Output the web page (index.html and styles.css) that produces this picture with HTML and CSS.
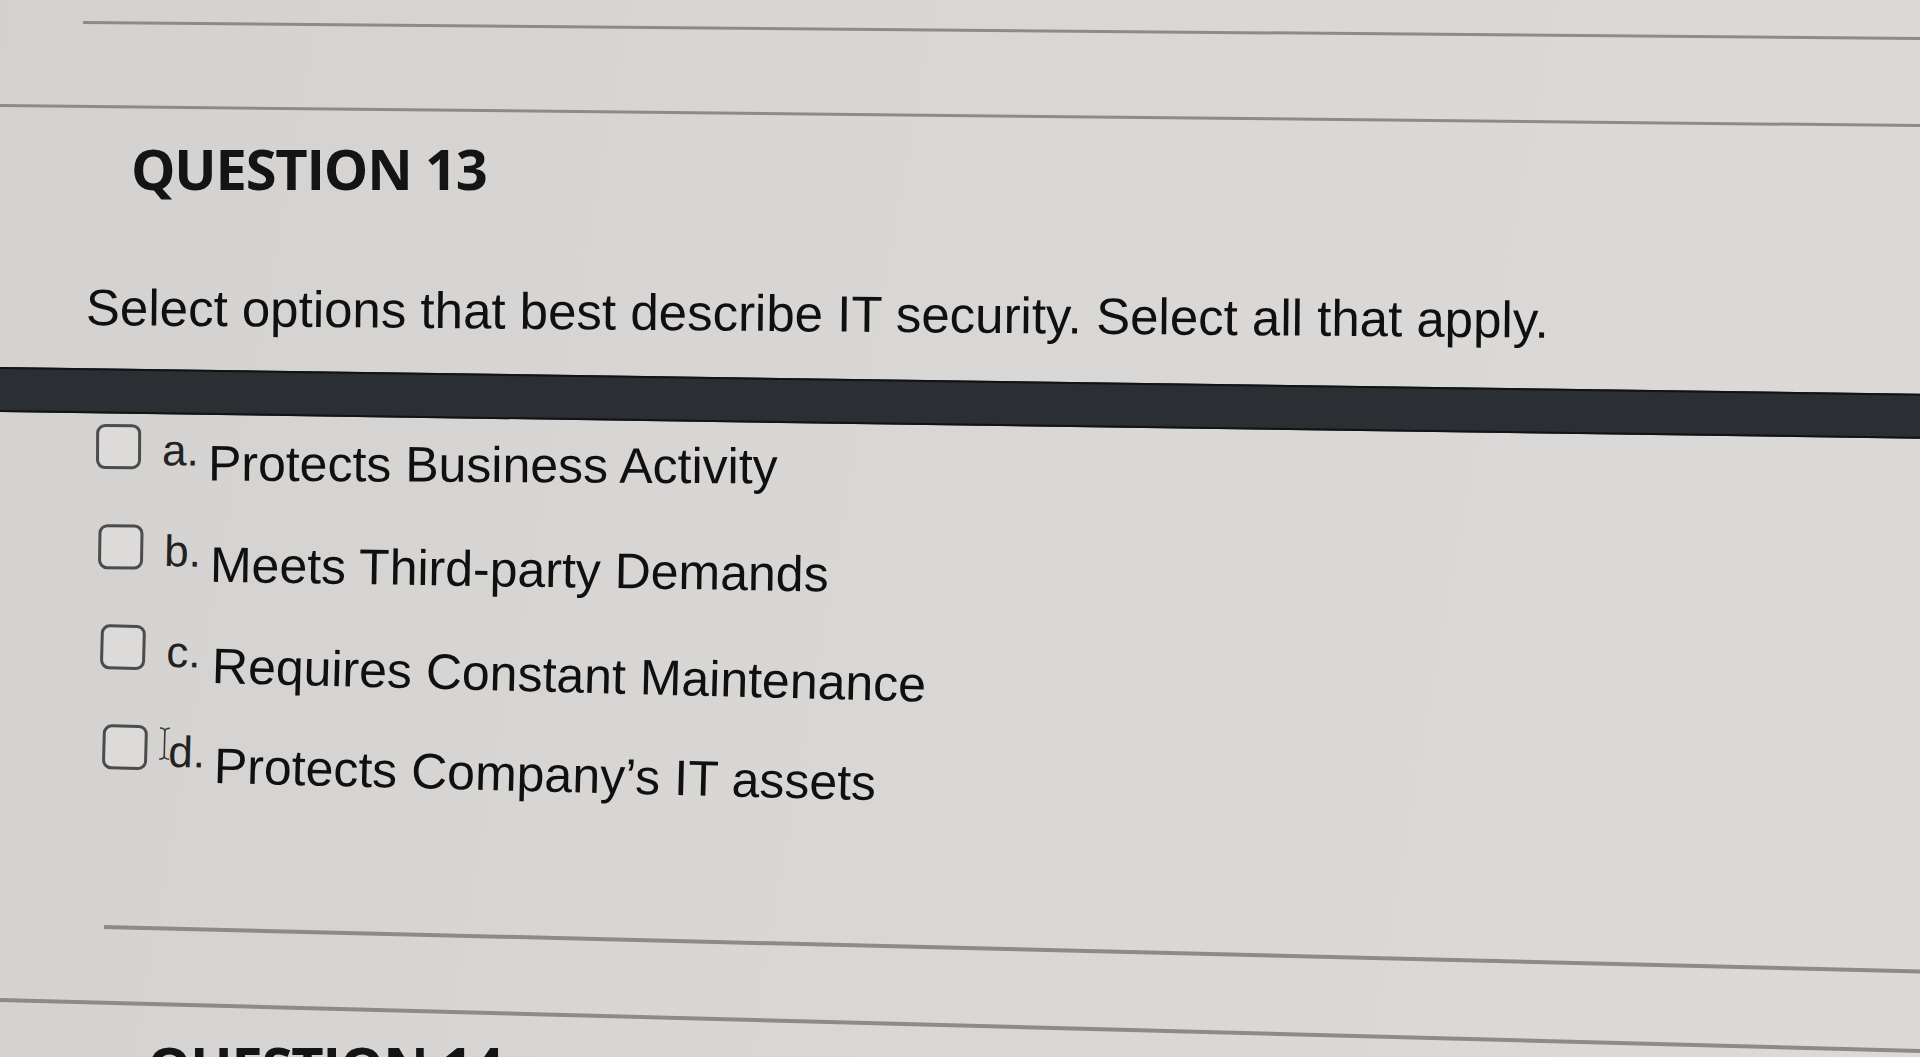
FILE: index.html
```html
<!DOCTYPE html>
<html lang="en">
<head>
<meta charset="utf-8">
<title>Question 13</title>
<link rel="stylesheet" href="styles.css">
</head>
<body>
<div class="page">
  <div class="rule rule-top"></div>
  <div class="rule rule-section"></div>
  <h2 class="q-title">QUESTION 13</h2>
  <p class="q-text">Select options that best describe IT security. Select all that apply.</p>
  <div class="answer-bar"></div>
  <ul class="options">
    <li class="option tilt-a"><span class="checkbox"></span><span class="opt-label">a.</span><span class="opt-text">Protects Business Activity</span></li>
    <li class="option tilt-b"><span class="checkbox"></span><span class="opt-label">b.</span><span class="opt-text">Meets Third-party Demands</span></li>
    <li class="option tilt-c"><span class="checkbox"></span><span class="opt-label">c.</span><span class="opt-text">Requires Constant Maintenance</span></li>
    <li class="option tilt-d"><span class="checkbox"></span><span class="opt-label">d.</span><span class="opt-text">Protects Company’s IT assets</span>
      <svg class="ibeam" width="14" height="34" viewBox="0 0 14 34"><path d="M2 1.5 Q7 1.5 7 5 Q7 1.5 12 1.5 M7 5 V29 M2 32.5 Q7 32.5 7 29 Q7 32.5 12 32.5" fill="none" stroke="#3a3a3a" stroke-width="1.6"/></svg>
    </li>
  </ul>
  <div class="rule rule-3"></div>
  <div class="rule rule-4"></div>
  <h2 class="q-title next">QUESTION 14</h2>
</div>
</body>
</html>
```
FILE: styles.css
```css
html, body {
  margin: 0;
  padding: 0;
  height: 1057px;
  overflow: hidden;
}
body {
  background: #d8d6d4;
  color: #111;
  font-family: "Liberation Sans", Arial, sans-serif;
}
.page {
  display: flex;
  flex-direction: column;
  align-items: flex-start;
  height: 1057px;
  overflow: hidden;
  background: linear-gradient(100deg, #d4d2d0 0%, #d9d7d5 45%, #dcdad8 100%);
}
.rule {
  height: 3px;
  background: #8c8b8a;
  transform-origin: left top;
  flex-shrink: 0;
}
.rule-top {
  margin-top: 21px;
  margin-left: 83px;
  width: 1880px;
  transform: rotate(0.5deg);
}
.rule-section {
  margin-top: 80px;
  width: 1960px;
  transform: rotate(0.6deg);
}
.q-title {
  margin: 33px 0 0 131px;
  font-family: "Open Sans", sans-serif;
  font-weight: 700;
  font-size: 56px;
  line-height: 56px;
  letter-spacing: -1.2px;
  color: #141414;
}
.q-text {
  margin: 86px 0 0 86px;
  font-size: 51px;
  line-height: 51px;
  white-space: nowrap;
  color: #101010;
  transform: rotate(0.5deg);
  transform-origin: left center;
}
.answer-bar {
  margin-top: 34px;
  width: 1980px;
  height: 41px;
  background: #2b2e33;
  border-top: 2px solid #121315;
  border-bottom: 2px solid #121315;
  transform: rotate(0.8deg);
  transform-origin: left top;
  flex-shrink: 0;
}
.options {
  list-style: none;
  margin: 27px 0 0 0;
  padding: 0 0 0 96px;
  display: flex;
  flex-direction: column;
  gap: 51px;
}
.option {
  position: relative;
  display: flex;
  align-items: flex-start;
  height: 49px;
  transform-origin: left center;
  white-space: nowrap;
}
.tilt-a { transform: rotate(0.3deg); }
.tilt-b { transform: rotate(0.9deg); margin-left: 2px; }
.tilt-c { transform: rotate(1.5deg); margin-left: 4px; }
.tilt-d { transform: rotate(1.5deg); margin-left: 6px; }
.checkbox {
  box-sizing: border-box;
  width: 45px;
  height: 45px;
  margin-top: -15px;
  border: 3px solid #4c4c4c;
  border-radius: 9px;
  background: #dddbd9;
  flex-shrink: 0;
}
.opt-label {
  margin: -11px 0 0 21px;
  font-size: 44px;
  line-height: 44px;
  color: #222;
  width: 46px;
}
.opt-text {
  font-size: 50px;
  line-height: 49px;
  color: #101010;
}
.ibeam {
  position: absolute;
  left: 55px;
  top: -14px;
}
.rule-3 {
  margin-top: 137px;
  margin-left: 104px;
  width: 1860px;
  height: 4px;
  transform: rotate(1.4deg);
}
.rule-4 {
  margin-top: 69px;
  width: 1980px;
  height: 4px;
  transform: rotate(1.52deg);
}
.q-title.next {
  margin: 36px 0 0 147px;
}
```
